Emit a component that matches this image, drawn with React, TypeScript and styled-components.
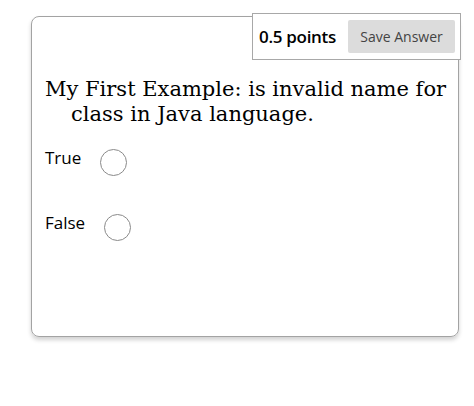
import { createGlobalStyle } from "styled-components"
import styled from "styled-components"

const GlobalStyle = createGlobalStyle`
  html, body {
    margin: 0;
    padding: 0;
    background: #fff;
  }
  body {
    font-family: "Open Sans", "Liberation Sans", sans-serif;
    color: #111;
  }
`

const options = ["True", "False"]

function App() {
  return <RootStyle>
    <GlobalStyle />
    <Card>
      <PointsBox>
        <Points>0.5 points</Points>
        <SaveButton>Save Answer</SaveButton>
      </PointsBox>
      <Question>My First Example: is invalid name for class in Java language.</Question>
      <Options>
        {options.map((o) => (
          <Option key={o}>
            <span>{o}</span>
            <Radio type="radio" name="answer" />
          </Option>
        ))}
      </Options>
    </Card>
  </RootStyle>
}

export default App

const RootStyle = styled.div`
  width: 474px;
  height: 406px;
  padding: 16px 0 0 31px;
  box-sizing: border-box;
`

const Card = styled.div`
  position: relative;
  width: 428px;
  height: 321px;
  box-sizing: border-box;
  border: 1.5px solid #a3a3a3;
  border-radius: 8px;
  box-shadow: 0 3px 4px rgba(0, 0, 0, 0.18);
  padding: 60px 8px 0 13px;
`

const PointsBox = styled.div`
  position: absolute;
  top: -4px;
  right: -3px;
  width: 209px;
  height: 47px;
  box-sizing: border-box;
  background: #fff;
  border: 1px solid #a8a8a8;
  display: flex;
  align-items: center;
  padding: 0 5px 0 6px;
  gap: 12px;
`

const Points = styled.span`
  font-size: 17px;
  font-weight: 600;
  letter-spacing: -0.3px;
  color: #000;
`

const SaveButton = styled.button`
  margin-left: auto;
  width: 107px;
  height: 33px;
  border: none;
  border-radius: 2px;
  background: #dcdcdc;
  color: #444;
  font-family: "Open Sans", "Liberation Sans", sans-serif;
  font-size: 14px;
  padding: 0;
`

const Question = styled.p`
  margin: 0;
  font-family: "DejaVu Serif", "Liberation Serif", serif;
  font-size: 21px;
  line-height: 25px;
  padding-left: 26px;
  text-indent: -26px;
  color: #000;
`

const Options = styled.div`
  margin-top: 15px;
  display: flex;
  flex-direction: column;
  gap: 38px;
`

const Option = styled.label`
  display: flex;
  align-items: flex-end;
  gap: 19px;
  font-size: 17px;
  color: #000;
  span {
    line-height: 22px;
  }
`

const Radio = styled.input`
  appearance: none;
  margin: 0;
  width: 27px;
  height: 27px;
  border: 1.5px solid #8a8a8a;
  border-radius: 50%;
  background: #fff;
  box-sizing: border-box;
  transform: translateY(7px);
`
